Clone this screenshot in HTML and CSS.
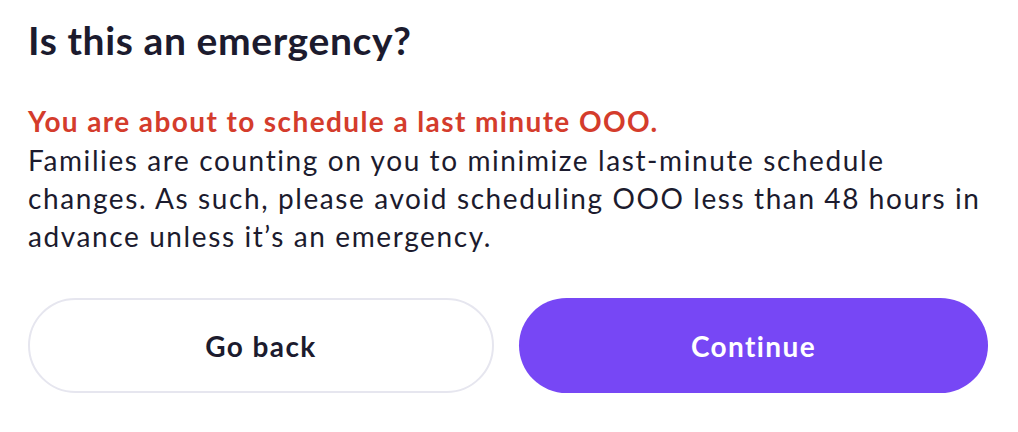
FILE: index.html
```html
<!DOCTYPE html>
<html>
<head>
<meta charset="utf-8">
<link rel="stylesheet" href="styles.css">
</head>
<body>
<div class="dialog">
  <h1 class="title">Is this an emergency?</h1>
  <div class="message">
    <p class="warning">You are about to schedule a last minute OOO.</p>
    <p class="body">Families are counting on you to minimize last-minute schedule<br>changes. As such, please avoid scheduling OOO less than 48 hours in<br>advance unless it’s an emergency.</p>
  </div>
  <div class="actions">
    <button class="btn btn-secondary">Go back</button>
    <button class="btn btn-primary">Continue</button>
  </div>
</div>
</body>
</html>
```
FILE: styles.css
```css
html, body {
  margin: 0;
  padding: 0;
  background: #ffffff;
}
body {
  font-family: Lato, "Noto Sans", sans-serif;
  color: #1c1b2e;
}
.dialog {
  padding: 17px 30px 0 28px;
  width: 1018px;
  box-sizing: border-box;
}
.title {
  margin: 0;
  font-size: 39px;
  font-weight: 700;
  line-height: 46px;
  letter-spacing: 0.6px;
}
.message {
  margin: 38px 0 0 0;
}
.warning {
  margin: 0;
  font-size: 28px;
  font-weight: 700;
  color: #d43c2c;
  line-height: 40px;
  letter-spacing: 1.4px;
}
.body {
  margin: 0;
  font-size: 28px;
  line-height: 38px;
  letter-spacing: 1.6px;
  white-space: nowrap;
}
.actions {
  display: flex;
  gap: 25px;
  margin-top: 43px;
}
.btn {
  height: 95px;
  border-radius: 48px;
  font-family: inherit;
  font-size: 28px;
  font-weight: 700;
  letter-spacing: 1.4px;
  cursor: pointer;
  box-sizing: border-box;
}
.btn-secondary {
  flex: 0 0 466px;
  background: #ffffff;
  border: 2px solid #e6e6ef;
  color: #1c1b2e;
}
.btn-primary {
  flex: 1;
  background: #7747f5;
  border: none;
  color: #ffffff;
}
```
